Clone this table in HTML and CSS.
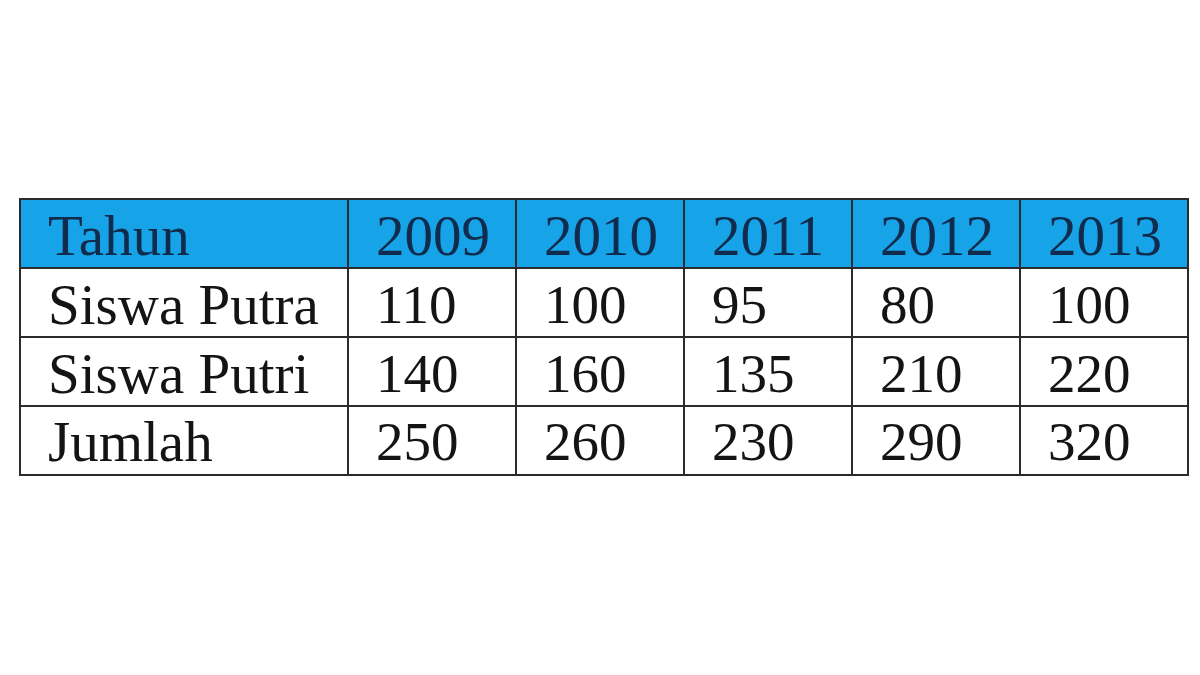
FILE: index.html
```html
<!DOCTYPE html>
<html lang="id">
<head>
  <meta charset="UTF-8">
  <meta name="viewport" content="width=device-width, initial-scale=1.0">
  <title>Data Siswa</title>
  <link rel="stylesheet" href="styles.css">
</head>
<body>
  <div class="page">
    <table class="data-table">
      <tr class="head-row">
        <td class="label">Tahun</td>
        <td>2009</td>
        <td>2010</td>
        <td>2011</td>
        <td>2012</td>
        <td>2013</td>
      </tr>
      <tr>
        <td class="label">Siswa Putra</td>
        <td>110</td>
        <td>100</td>
        <td>95</td>
        <td>80</td>
        <td>100</td>
      </tr>
      <tr>
        <td class="label">Siswa Putri</td>
        <td>140</td>
        <td>160</td>
        <td>135</td>
        <td>210</td>
        <td>220</td>
      </tr>
      <tr class="last-row">
        <td class="label">Jumlah</td>
        <td>250</td>
        <td>260</td>
        <td>230</td>
        <td>290</td>
        <td>320</td>
      </tr>
    </table>
  </div>
</body>
</html>
```

FILE: styles.css
```css
html, body{
  margin: 0;
  background: #fff;
}
.page{
  padding: 198px 0 0 19px;
}
.data-table{
  border-collapse: collapse;
  table-layout: fixed;
  width: 1170px;
  font-family: "Liberation Serif", "Times New Roman", serif;
  font-size: 55px;
  color: #141414;
}
.data-table td{
  box-sizing: border-box;
  width: 168px;
  height: 69px;
  padding: 3px 0 0 27px;
  border: 2px solid #2b2b2b;
  line-height: 63px;
  white-space: nowrap;
  vertical-align: middle;
}
.data-table td.label{
  width: 328px;
  font-size: 57px;
}
.last-row td{
  line-height: 64px;
}
.head-row td{
  background: #17a3e8;
  color: #112b4c;
  font-size: 57px;
}
```
